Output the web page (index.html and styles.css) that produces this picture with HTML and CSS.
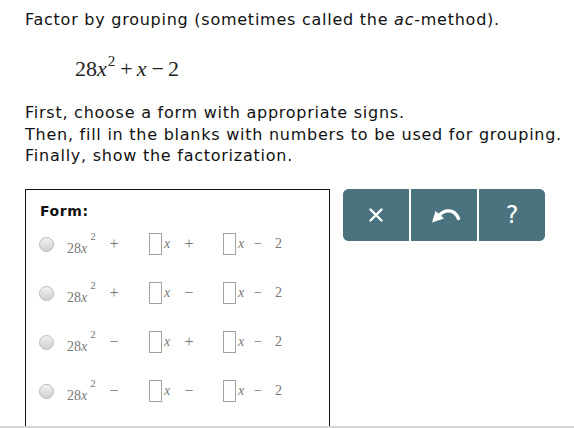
FILE: index.html
```html
<!DOCTYPE html>
<html lang="en">
<head>
    <meta charset="UTF-8">
    <title>Factor by grouping</title>
    <link rel="stylesheet" href="styles.css">
</head>
<body>
    <div class="page">
        <p class="intro">Factor by grouping (sometimes called the <i>ac</i>-method).</p>

        <div class="poly">28<i>x</i><sup>2</sup><span class="op">+</span><i>x</i><span class="op">&minus;</span>2</div>

        <p class="steps">
            First, choose a form with appropriate signs.<br>
            Then, fill in the blanks with numbers to be used for grouping.<br>
            Finally, show the factorization.
        </p>

        <div class="work">
            <div class="form-box">
                <div class="form-label">Form:</div>

                <div class="form-row">
                    <span class="radio"></span>
                    <span class="term">28<i>x</i><sup>2</sup></span>
                    <span class="sign">+</span>
                    <span class="blank"></span><i class="var">x</i>
                    <span class="sign sign-2">+</span>
                    <span class="blank blank-2"></span><i class="var">x</i>
                    <span class="sign sign-3">&minus;</span>
                    <span class="num">2</span>
                </div>

                <div class="form-row">
                    <span class="radio"></span>
                    <span class="term">28<i>x</i><sup>2</sup></span>
                    <span class="sign">+</span>
                    <span class="blank"></span><i class="var">x</i>
                    <span class="sign sign-2">&minus;</span>
                    <span class="blank blank-2"></span><i class="var">x</i>
                    <span class="sign sign-3">&minus;</span>
                    <span class="num">2</span>
                </div>

                <div class="form-row">
                    <span class="radio"></span>
                    <span class="term">28<i>x</i><sup>2</sup></span>
                    <span class="sign">&minus;</span>
                    <span class="blank"></span><i class="var">x</i>
                    <span class="sign sign-2">+</span>
                    <span class="blank blank-2"></span><i class="var">x</i>
                    <span class="sign sign-3">&minus;</span>
                    <span class="num">2</span>
                </div>

                <div class="form-row">
                    <span class="radio"></span>
                    <span class="term">28<i>x</i><sup>2</sup></span>
                    <span class="sign">&minus;</span>
                    <span class="blank"></span><i class="var">x</i>
                    <span class="sign sign-2">&minus;</span>
                    <span class="blank blank-2"></span><i class="var">x</i>
                    <span class="sign sign-3">&minus;</span>
                    <span class="num">2</span>
                </div>
            </div>

            <div class="tools">
                <button class="tool" title="Clear">
                    <svg width="16" height="16" viewBox="0 0 16 16">
                        <path d="M2.5 2.5 L13.5 13.5 M13.5 2.5 L2.5 13.5" stroke="#fff" stroke-width="2.4" stroke-linecap="round" fill="none"/>
                    </svg>
                </button>
                <button class="tool" title="Undo">
                    <svg width="30" height="18" viewBox="0 0 30 18" class="undo-icon">
                        <path d="M8.5 9 C14 3, 23.5 3, 27.5 12.5" stroke="#fff" stroke-width="3.4" stroke-linecap="round" fill="none"/>
                        <polygon points="1,16.5 4.5,5 13,12.5" fill="#fff"/>
                    </svg>
                </button>
                <button class="tool tool-help" title="Help">?</button>
            </div>
        </div>
    </div>
    <div class="bottom-bar"></div>
</body>
</html>
```

FILE: styles.css
```css
html, body {
    margin: 0;
    padding: 0;
    overflow: hidden;
    background-color: #ffffff;
}

body {
    color: #111;
    font-family: 'DejaVu Sans', Verdana, sans-serif;
    font-size: 16px;
    letter-spacing: 0.75px;
}

.page {
    padding: 9px 0 0 25px;
}

.intro {
    margin: 0;
    line-height: 21px;
}

/* polynomial on its own line */
.poly {
    margin-top: 24px;
    padding-left: 50px;
    height: 30px;
    line-height: 30px;
    font-family: 'Liberation Serif', 'Times New Roman', serif;
    font-size: 22px;
    letter-spacing: 0;
    color: #222;
}

.poly sup {
    font-size: 15px;
    line-height: 0;
    vertical-align: 10px;
    margin-left: 1px;
}

.poly .op {
    padding: 0 4px 0 5px;
}

.steps {
    margin: 18px 0 0;
    line-height: 21.5px;
}

.work {
    display: flex;
    align-items: flex-start;
    gap: 13px;
    margin-top: 22px;
}

.form-box {
    width: 305px;
    height: 237px;
    border: 1px solid #111;
    border-bottom: none;
    padding: 12px 0 0 13px;
    box-sizing: border-box;
}

.form-label {
    font-weight: bold;
    font-size: 14px;
    letter-spacing: 0.6px;
    line-height: 18px;
    padding-left: 1px;
}

.form-row {
    display: flex;
    align-items: center;
    height: 49px;
    font-family: 'Liberation Serif', 'Times New Roman', serif;
    font-size: 14px;
    letter-spacing: 0;
    color: #777;
}

.radio {
    width: 13px;
    height: 13px;
    border-radius: 50%;
    border: 1px solid #b9b9b9;
    background: linear-gradient(#f2f2f2, #cfcfcf);
    margin-right: 13px;
    flex-shrink: 0;
}

.term {
    width: 36px;
    position: relative;
    top: 2px;
}

.term sup {
    font-size: 11px;
    line-height: 0;
    vertical-align: 13px;
    margin-left: 3px;
}

.sign {
    width: 22px;
    text-align: center;
    font-size: 16px;
}

.blank {
    width: 11px;
    height: 20px;
    border: 1px solid #a3a3a3;
    margin-left: 24px;
    flex-shrink: 0;
}

.blank-2 {
    margin-left: 23px;
}

.var {
    margin-left: 2px;
    width: 7px;
    font-family: 'Liberation Serif', 'Times New Roman', serif;
}

.sign-2 {
    margin-left: 7px;
}

.sign-3 {
    margin-left: 2px;
    font-size: 14px;
}

.num {
    margin-left: 6px;
}

/* tool buttons on the right */
.tools {
    display: flex;
    width: 202px;
    height: 52px;
    border-radius: 6px;
    overflow: hidden;
    background-color: #4b737f;
}

.tool {
    flex: 1;
    border: none;
    margin: 0;
    padding: 0;
    background-color: #4b737f;
    color: #ffffff;
    display: flex;
    justify-content: center;
    align-items: center;
    cursor: pointer;
}

.tool + .tool {
    border-left: 2px solid #ffffff;
}

.undo-icon {
    margin-left: 4px;
}

.tool-help {
    font-family: 'DejaVu Sans', Verdana, sans-serif;
    font-size: 24px;
    letter-spacing: 0;
}

.bottom-bar {
    height: 2px;
    background-color: #d6d6d6;
}
```
